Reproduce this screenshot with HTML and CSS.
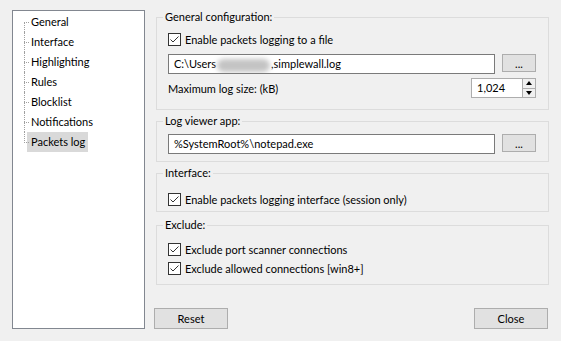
FILE: index.html
```html
<!DOCTYPE html>
<html lang="en">
  <head>
    <meta charset="UTF-8" />
    <title>Settings</title>
    <link rel="stylesheet" href="styles.css">
  </head>
  <body>
    <div class="dialog">
      <ul class="tree">
        <li><span>General</span></li>
        <li><span>Interface</span></li>
        <li><span>Highlighting</span></li>
        <li><span>Rules</span></li>
        <li><span>Blocklist</span></li>
        <li><span>Notifications</span></li>
        <li class="selected"><span>Packets log</span></li>
      </ul>

      <div class="pane">
        <fieldset class="group general">
          <legend>General configuration:</legend>
          <label class="check">
            <svg class="box" width="13" height="13" viewBox="0 0 13 13"><rect x="0.5" y="0.5" width="12" height="12" fill="#fff" stroke="#333"/><path d="M2.5 6.5 L5 9 L10.5 3.5" fill="none" stroke="#333"/></svg>
            Enable packets logging to a file
          </label>
          <div class="path-row">
            <div class="field">C:\Users<span class="blur"></span>,simplewall.log</div>
            <button class="btn browse">...</button>
          </div>
          <div class="size-row">
            <span>Maximum log size: (kB)</span>
            <div class="spin">
              <span class="spin-value">1,024</span>
              <span class="spin-arrows"><i class="up"></i><i class="down"></i></span>
            </div>
          </div>
        </fieldset>

        <fieldset class="group viewer">
          <legend>Log viewer app:</legend>
          <div class="path-row">
            <div class="field">%SystemRoot%\notepad.exe</div>
            <button class="btn browse">...</button>
          </div>
        </fieldset>

        <fieldset class="group iface">
          <legend>Interface:</legend>
          <label class="check">
            <svg class="box" width="13" height="13" viewBox="0 0 13 13"><rect x="0.5" y="0.5" width="12" height="12" fill="#fff" stroke="#333"/><path d="M2.5 6.5 L5 9 L10.5 3.5" fill="none" stroke="#333"/></svg>
            Enable packets logging interface (session only)
          </label>
        </fieldset>

        <fieldset class="group exclude">
          <legend>Exclude:</legend>
          <label class="check">
            <svg class="box" width="13" height="13" viewBox="0 0 13 13"><rect x="0.5" y="0.5" width="12" height="12" fill="#fff" stroke="#333"/><path d="M2.5 6.5 L5 9 L10.5 3.5" fill="none" stroke="#333"/></svg>
            Exclude port scanner connections
          </label>
          <label class="check">
            <svg class="box" width="13" height="13" viewBox="0 0 13 13"><rect x="0.5" y="0.5" width="12" height="12" fill="#fff" stroke="#333"/><path d="M2.5 6.5 L5 9 L10.5 3.5" fill="none" stroke="#333"/></svg>
            Exclude allowed connections [win8+]
          </label>
        </fieldset>

        <div class="actions">
          <button class="btn action">Reset</button>
          <button class="btn action">Close</button>
        </div>
      </div>
    </div>
  </body>
</html>
```

FILE: styles.css
```css
html,
body {
  margin: 0;
  padding: 0;
  background-color: #f0f0f0;
  font-family: Lato, "Open Sans", sans-serif;
  font-size: 11px;
  color: #000;
}

.dialog {
  display: flex;
  gap: 11px;
  padding: 10px 12px 0;
}

/* tree */
.tree {
  box-sizing: border-box;
  width: 133px;
  height: 319px;
  margin: 0;
  padding: 1px 0 0;
  list-style: none;
  background: #fff;
  border: 1px solid #828790;
}

.tree li {
  position: relative;
  height: 20px;
  line-height: 20px;
  padding-left: 14px;
}

.tree li span {
  display: inline-block;
  padding: 0 3px 0 4px;
}

.tree li.selected span {
  background: #d9d9d9;
}

.tree li::before {
  content: "";
  position: absolute;
  left: 11px;
  top: 10px;
  width: 5px;
  border-top: 1px dotted #a0a0a0;
}

.tree li::after {
  content: "";
  position: absolute;
  left: 11px;
  top: 0;
  height: 20px;
  border-left: 1px dotted #a0a0a0;
}

.tree li:first-child::after {
  top: 10px;
  height: 10px;
}

.tree li:last-child::after {
  height: 11px;
}

/* groups */
.pane {
  width: 393px;
  display: flex;
  flex-direction: column;
}

.group {
  margin: 0;
  min-width: 0;
  border: 1px solid #dcdcdc;
  padding: 0 11px;
  display: flex;
  flex-direction: column;
}

.group legend {
  padding: 0 2px;
  margin-left: -5px;
  line-height: 14px;
}

.general {
  padding-top: 7px;
  padding-bottom: 11px;
}

.viewer {
  margin-top: 4px;
  padding-top: 6px;
  padding-bottom: 7px;
}

.iface {
  margin-top: 4px;
  padding-top: 11px;
  padding-bottom: 4px;
}

.exclude {
  margin-top: 6px;
  padding-top: 9px;
  padding-bottom: 8px;
  gap: 3px;
}

.check {
  display: flex;
  align-items: center;
  gap: 4px;
  height: 16px;
}

.path-row {
  display: flex;
  align-items: flex-start;
  gap: 7px;
}

.general .path-row {
  margin-top: 7px;
}

.field {
  box-sizing: border-box;
  width: 327px;
  height: 20px;
  padding: 0 5px;
  line-height: 18px;
  background: #fff;
  border: 1px solid #7a7a7a;
  white-space: nowrap;
  overflow: hidden;
}

.blur {
  display: inline-block;
  width: 53px;
  height: 13px;
  margin: 0 1px;
  vertical-align: middle;
  background: #c4c4c4;
  border-radius: 7px;
  filter: blur(2.5px);
}

.btn {
  box-sizing: border-box;
  margin: 0;
  padding: 0;
  font: inherit;
  color: #000;
  background: #e1e1e1;
  border: 1px solid #adadad;
}

.browse {
  width: 34px;
  height: 18px;
  line-height: 12px;
  padding-top: 2px;
}

.size-row {
  display: flex;
  justify-content: space-between;
  align-items: center;
  margin-top: 4px;
  height: 20px;
}

.spin {
  box-sizing: border-box;
  display: flex;
  width: 65px;
  height: 20px;
  margin-right: 1px;
  background: #fff;
  border: 1px solid #adadad;
}

.spin-value {
  flex: 1;
  padding-left: 5px;
  line-height: 18px;
}

.spin-arrows {
  display: flex;
  flex-direction: column;
  width: 12px;
  border-left: 1px solid #adadad;
}

.spin-arrows i {
  flex: 1;
  display: flex;
  align-items: center;
  justify-content: center;
  background: #f0f0f0;
}

.spin-arrows i + i {
  border-top: 1px solid #adadad;
}

.spin-arrows .up::before {
  content: "";
  border: 3px solid transparent;
  border-top: 0;
  border-bottom: 4px solid #000;
}

.spin-arrows .down::before {
  content: "";
  border: 3px solid transparent;
  border-bottom: 0;
  border-top: 4px solid #000;
}

.actions {
  display: flex;
  justify-content: space-between;
  margin: 23px 1px 0 -2px;
}

.action {
  width: 74px;
  height: 21px;
}
```
